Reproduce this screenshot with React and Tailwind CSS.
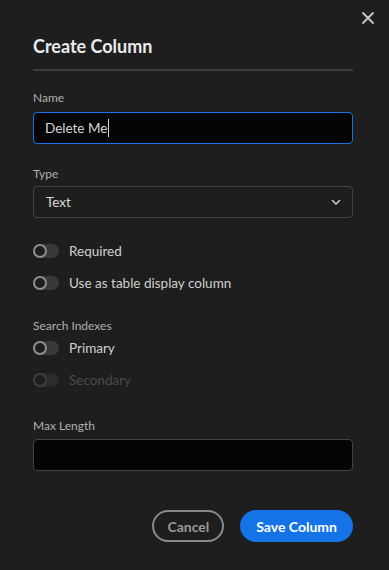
import React from "react";

function Toggle({ label, disabled }) {
  return (
    <div className="flex items-center h-[32px]">
      <div className={"relative w-[26px] h-[14px] rounded-full " + (disabled ? "bg-[#2c2c2c]" : "bg-[#393939]")}>
        <div className={"absolute left-0 top-0 w-[14px] h-[14px] rounded-full border-2 bg-[#1e1e1e] " + (disabled ? "border-[#3e3e3e]" : "border-[#8e8e8e]")}></div>
      </div>
      <span className={"ml-[10px] text-[13.5px] " + (disabled ? "text-[#4a4a4a]" : "text-[#d0d0d0]")}>{label}</span>
    </div>
  );
}

export default function App() {
  return (
    <div className="w-[389px] h-[570px] bg-[#1e1e1e] relative overflow-hidden" style={{ fontFamily: "Lato, 'Noto Sans', sans-serif" }}>
      <button className="absolute right-[14px] top-[11px] w-[14px] h-[14px] text-[#c8c8c8]">
        <svg viewBox="0 0 14 14" width="14" height="14" fill="none" stroke="currentColor" strokeWidth="1.8" strokeLinecap="round">
          <path d="M2 2 L12 12 M12 2 L2 12" />
        </svg>
      </button>
      <div className="pl-[33px] pr-[36px] pt-[34px]">
        <h1 className="text-[18px] font-bold text-[#ebebeb] leading-[24px]">Create Column</h1>
        <div className="mt-[11px] h-[2px] bg-[#3c3c3c]"></div>

        <div className="mt-[19px] text-[12px] text-[#b0b0b0] leading-[16px]">Name</div>
        <div className="mt-[6px] h-[32px] rounded-[4px] border border-[#1473e6] bg-[#050505] flex items-center px-[11px] text-[13.5px] text-[#d8d8d8]">
          Delete Me<span className="inline-block w-px h-[18px] bg-[#d8d8d8] ml-px"></span>
        </div>

        <div className="mt-[22px] text-[12px] text-[#b0b0b0] leading-[16px]">Type</div>
        <div className="mt-[4px] h-[32px] rounded-[4px] border border-[#444444] bg-[#1e1e1e] flex items-center justify-between pl-[12px] pr-[11px] text-[13.5px] text-[#d8d8d8]">
          <span>Text</span>
          <svg width="10" height="10" viewBox="0 0 10 10" fill="none" stroke="#c8c8c8" strokeWidth="1.6" strokeLinecap="round" strokeLinejoin="round">
            <path d="M1.5 3.5 L5 7 L8.5 3.5" />
          </svg>
        </div>

        <div className="mt-[17px]">
          <Toggle label="Required" />
          <Toggle label="Use as table display column" />
        </div>

        <div className="mt-[19px] text-[12px] text-[#b0b0b0] leading-[16px]">Search Indexes</div>
        <div className="-mt-[2px]">
          <Toggle label="Primary" />
          <Toggle label="Secondary" disabled />
        </div>

        <div className="mt-[22px] text-[12px] text-[#b0b0b0] leading-[16px]">Max Length</div>
        <div className="mt-[5px] h-[32px] rounded-[4px] border border-[#444444] bg-[#050505]"></div>

        <div className="mt-[39px] flex justify-end gap-[16px]">
          <button className="h-[32px] px-[13px] rounded-full border-2 border-[#8a8a8a] text-[14px] font-bold text-[#9a9a9a]">Cancel</button>
          <button className="h-[32px] px-[16px] rounded-full bg-[#1473e6] text-[14px] font-bold text-white">Save Column</button>
        </div>
      </div>
    </div>
  );
}
